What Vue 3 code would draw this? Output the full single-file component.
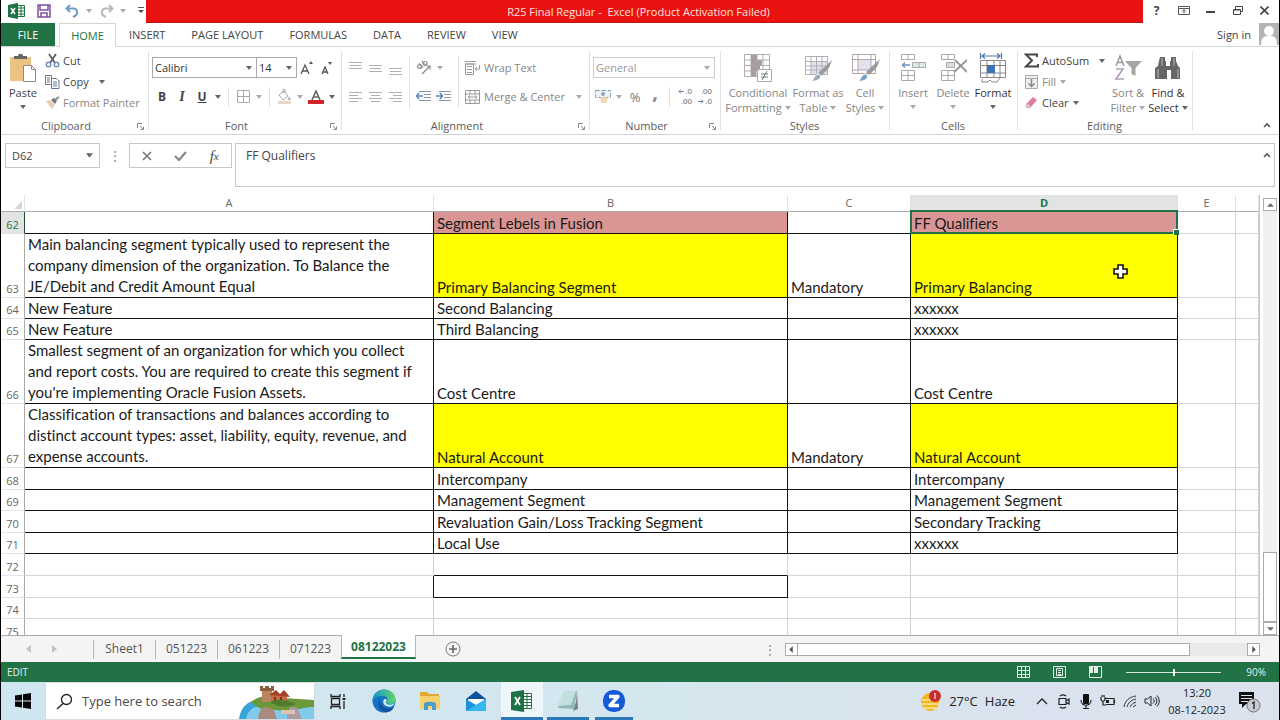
<script setup>
import { ref } from 'vue'

const menuTabs = ['INSERT', 'PAGE LAYOUT', 'FORMULAS', 'DATA', 'REVIEW', 'VIEW']
const columns = ['A', 'B', 'C', 'D', 'E', '']
const sheets = ['Sheet1', '051223', '061223', '071223']
const formula = ref('FF Qualifiers')
const cellName = ref('D62')
const query = ref('')
const zoom = ref(90)

const rows = [
  { n: 62, h: 22, box: true, a: '', b: 'Segment Lebels in Fusion', c: '', d: 'FF Qualifiers', fill: 'rose' },
  { n: 63, h: 64, box: true, a: 'Main balancing segment typically used to represent the\ncompany dimension of the organization. To Balance the\nJE/Debit and Credit Amount Equal', b: 'Primary Balancing Segment', c: 'Mandatory', d: 'Primary Balancing', fill: 'yellow' },
  { n: 64, h: 21, box: true, a: 'New Feature', b: 'Second Balancing', c: '', d: 'xxxxxx' },
  { n: 65, h: 21, box: true, a: 'New Feature', b: 'Third Balancing', c: '', d: 'xxxxxx' },
  { n: 66, h: 64, box: true, a: "Smallest segment of an organization for which you collect\nand report costs. You are required to create this segment if\nyou're implementing Oracle Fusion Assets.", b: 'Cost Centre', c: '', d: 'Cost Centre' },
  { n: 67, h: 64, box: true, a: 'Classification of transactions and balances according to\ndistinct account types: asset, liability, equity, revenue, and\nexpense accounts.', b: 'Natural Account', c: 'Mandatory', d: 'Natural Account', fill: 'yellow' },
  { n: 68, h: 22, box: true, a: '', b: 'Intercompany', c: '', d: 'Intercompany' },
  { n: 69, h: 21, box: true, a: '', b: 'Management Segment', c: '', d: 'Management Segment' },
  { n: 70, h: 22, box: true, a: '', b: 'Revaluation Gain/Loss Tracking Segment', c: '', d: 'Secondary Tracking' },
  { n: 71, h: 21, box: true, a: '', b: 'Local Use', c: '', d: 'xxxxxx' },
  { n: 72, h: 22 },
  { n: 73, h: 22 },
  { n: 74, h: 21 },
  { n: 75, h: 22 }
]

function cellClass(row, key) {
  return {
    boxed: row.box,
    [row.fill]: row.fill && (key === 'b' || key === 'd'),
    selected: row.n === 62 && key === 'd',
    'edge-bottom': (row.n === 72 || row.n === 73) && key === 'b',
    'edge-right': row.n === 73 && (key === 'a' || key === 'b')
  }
}
</script>

<template>
  <div class="window">
    <header class="titlebar">
      <div class="quick">
        <svg class="xl" width="18" height="16" viewBox="0 0 18 16"><path fill="#1e7145" d="M0 2l10-2v16L0 14z" /><path d="M10 2.500h6.500v11H10M10 5h6M10 8h6M10 11h6M13 3v10" fill="none" stroke="#1e7145" /><path d="M3 5l4 6M7 5l-4 6" stroke="#fff" stroke-width="1.500" /></svg>
        <button class="q20" aria-label="Save"><svg width="14" height="14" viewBox="0 0 14 14"><path d="M1 1h12v12H1z M3 1v5h8V1 M4 13V9h6v4" fill="#fff" stroke="#7d4fa0" stroke-width="1.500" /></svg></button>
        <button class="q26" aria-label="Undo"><svg width="15" height="14" viewBox="0 0 15 14"><path d="M5 1L1.500 4.500L5 8M2 4.500h7a4 4 0 0 1 1 7.500l-2 1" fill="none" stroke="#6f9cc8" stroke-width="2" /></svg></button>
        <svg class="caret light" width="6" height="4" viewBox="0 0 6 4"><path d="M0 0h6L3 4z" /></svg>
        <button class="q26" aria-label="Redo"><svg width="15" height="14" viewBox="0 0 15 14"><path d="M10 1l3.500 3.500L10 8M13 4.500H6A4 4 0 0 0 5 12l2 1" fill="none" stroke="#b9b9b9" stroke-width="2" /></svg></button>
        <svg class="caret light" width="6" height="4" viewBox="0 0 6 4"><path d="M0 0h6L3 4z" /></svg>
        <svg class="custom" width="6" height="7" viewBox="0 0 6 7"><path d="M0 0h6v1H0zM0 3h6L3 6z" fill="#555" /></svg>
      </div>
      <h1>R25 Final Regular - &nbsp;Excel (Product Activation Failed)</h1>
      <div class="winctl">
        <button aria-label="Help"><b>?</b></button>
        <button aria-label="Ribbon options"><svg width="12" height="9" viewBox="0 0 12 9"><path d="M.5.5h11v8H.5zM.5 2.500h11M6 7.500V4M4 5.500l2-2 2 2" fill="none" stroke="#555" /></svg></button>
        <button aria-label="Minimize"><svg width="9" height="9" viewBox="0 0 9 9"><path d="M0 6h9" stroke="#444" stroke-width="2" /></svg></button>
        <button aria-label="Restore"><svg width="10" height="9" viewBox="0 0 10 9"><path d="M.5 3.500h7v5h-7zM2.500 3V.5h7v5H8M1 4h6" fill="none" stroke="#444" /></svg></button>
        <button aria-label="Close"><svg width="9" height="9" viewBox="0 0 9 9"><path d="M.5.5l8 8M8.500.5l-8 8" stroke="#444" stroke-width="1.600" /></svg></button>
      </div>
    </header>

    <nav class="menu">
      <button class="file">FILE</button>
      <button class="home">HOME</button>
      <button v-for="t in menuTabs" :key="t" class="tab">{{ t }}</button>
      <a class="signin" href="#">Sign in</a>
      <svg class="avatar" width="20" height="22" viewBox="0 0 20 22"><path fill="#b4b4b4" d="M0 0h20v22H0z" /><circle cx="10" cy="8" r="5" fill="#fff" /><path d="M2 22c0-6 2-9 6-9h4c4 0 6 3 6 9z" fill="#fff" /></svg>
    </nav>

    <section class="ribbon">
      <div class="group g-clip">
        <div class="body">
          <button class="big paste">
            <svg width="30" height="30" viewBox="0 0 30 30"><path fill="#eac282" d="M2 4h21v24H2z" /><path d="M6 6V3h4c0-3 5-3 5 0h4v3z" fill="#666" /><path fill="#fff" stroke="#8a8a8a" d="M15.500 12.500h8l4 4v12h-12zM23.500 12.500v4h4" /></svg>
            <span>Paste</span><svg class="caret" width="6" height="4" viewBox="0 0 6 4"><path d="M0 0h6L3 4z" /></svg>
          </button>
          <div class="stack">
            <button><svg width="15" height="15" viewBox="0 0 15 15"><path d="M4 1l6 9M11 1L5 10" stroke="#5c5c5c" stroke-width="1.800" /><circle cx="3.500" cy="11.500" r="2.300" fill="none" stroke="#6d8fb5" stroke-width="1.400" /><circle cx="11.500" cy="11.500" r="2.300" fill="none" stroke="#6d8fb5" stroke-width="1.400" /></svg>Cut</button>
            <button><svg width="15" height="14" viewBox="0 0 15 14"><path d="M.5.5h6v9h-6zM2 3h3M2 5h3M2 7h3" fill="#fff" stroke="#777" /><path d="M6.500 3.500h5l2.500 2.500v7.500h-7.500zM8 7h4M8 9h4M8 11h4" fill="#fff" stroke="#62799a" /></svg>Copy<svg class="caret gap" width="6" height="4" viewBox="0 0 6 4"><path d="M0 0h6L3 4z" /></svg></button>
            <button class="off"><svg width="15" height="13" viewBox="0 0 15 13"><path d="M1 5l4-1 5 5-3 4z" fill="#eacdb0" /><path d="M6 4l3-2 3 3-2 3z" fill="#777" /><path d="M10 4l4-3" stroke="#888" stroke-width="2" /></svg>Format Painter</button>
          </div>
        </div>
        <footer><span>Clipboard</span><svg class="launch" width="7" height="7" viewBox="0 0 7 7"><path d="M.5 5V.5H5M3 3l3 3M6.500 3.500v3h-3" /></svg></footer>
      </div>

      <div class="group g-font">
        <div class="body rows">
          <div class="line">
            <label class="combo fname"><select aria-label="Font"><option>Calibri</option></select><svg class="caret" width="6" height="4" viewBox="0 0 6 4"><path d="M0 0h6L3 4z" /></svg></label>
            <label class="combo fsize"><select aria-label="Font size"><option>14</option></select><svg class="caret" width="6" height="4" viewBox="0 0 6 4"><path d="M0 0h6L3 4z" /></svg></label>
            <button class="i20 grow" aria-label="Increase font size"><svg width="14" height="14" viewBox="0 0 14 14"><path d="M1 13L5 4l4 9M2.500 10h5" fill="none" stroke="#555" stroke-width="1.300" /><path d="M9 3h4l-2-3z" fill="#557" /></svg></button>
            <button class="i20" aria-label="Decrease font size"><svg width="14" height="14" viewBox="0 0 14 14"><path d="M2 13l3-7 3 7M3 11h4" fill="none" stroke="#555" stroke-width="1.300" /><path d="M8 1h4l-2 3z" fill="#557" /></svg></button>
          </div>
          <div class="line">
            <button class="i20 fmt"><b>B</b></button><button class="i20 fmt it"><b>I</b></button><button class="i20 fmt un"><b>U</b></button>
            <button class="i12" aria-label="Underline options"><svg class="caret" width="6" height="4" viewBox="0 0 6 4"><path d="M0 0h6L3 4z" /></svg></button>
            <i class="sep"></i>
            <button class="i20" aria-label="Borders"><svg width="13" height="13" viewBox="0 0 13 13"><path d="M.5.5h12v12H.5zM6.500 0v13M0 6.500h13" fill="none" stroke="#aaa" /></svg></button>
            <button class="i12" aria-label="Border options"><svg class="caret light" width="6" height="4" viewBox="0 0 6 4"><path d="M0 0h6L3 4z" /></svg></button>
            <i class="sep"></i>
            <button class="i20" aria-label="Fill colour"><svg width="15" height="15" viewBox="0 0 15 15"><path d="M2 6l5-4 4 5-5 4zM6 4V0h2v4" fill="none" stroke="#aaa" /><path d="M12 7l2 4h-3z" fill="#aaa" /><path fill="#e8d6c6" d="M1 12h13v3H1z" /></svg></button>
            <button class="i12" aria-label="Fill options"><svg class="caret light" width="6" height="4" viewBox="0 0 6 4"><path d="M0 0h6L3 4z" /></svg></button>
            <button class="i20" aria-label="Font colour"><svg width="16" height="14" viewBox="0 0 16 14"><path d="M4 10l4-9 4 9M5.500 7h5" fill="none" stroke="#666" stroke-width="1.600" /><path fill="#d2232a" d="M0 10h16v4H0z" /></svg></button>
            <button class="i12" aria-label="Font colour options"><svg class="caret" width="6" height="4" viewBox="0 0 6 4"><path d="M0 0h6L3 4z" /></svg></button>
          </div>
        </div>
        <footer><span>Font</span><svg class="launch" width="7" height="7" viewBox="0 0 7 7"><path d="M.5 5V.5H5M3 3l3 3M6.500 3.500v3h-3" /></svg></footer>
      </div>

      <div class="group g-align">
        <div class="body">
          <div class="rows">
            <div class="line">
              <button class="i20" aria-label="Top align"><svg width="13" height="14" viewBox="0 0 13 14"><path d="M0 1.500h13M1 4.500h11M0 7.500h13" stroke="#b0b0b0" /></svg></button>
              <button class="i20" aria-label="Middle align"><svg width="13" height="14" viewBox="0 0 13 14"><path d="M0 4.500h13M1 7.500h11M0 10.500h13" stroke="#b0b0b0" /></svg></button>
              <button class="i20" aria-label="Bottom align"><svg width="13" height="14" viewBox="0 0 13 14"><path d="M0 7.500h13M1 10.500h11M0 13.500h13" stroke="#b0b0b0" /></svg></button>
            </div>
            <div class="line">
              <button class="i20" aria-label="Align left"><svg width="13" height="11" viewBox="0 0 13 11"><path d="M0 1.500h13M0 4.500h9M0 7.500h13M0 10.500h9" stroke="#b0b0b0" /></svg></button>
              <button class="i20" aria-label="Centre"><svg width="13" height="11" viewBox="0 0 13 11"><path d="M0 1.500h13M2 4.500h9M0 7.500h13M2 10.500h9" stroke="#b0b0b0" /></svg></button>
              <button class="i20" aria-label="Align right"><svg width="13" height="11" viewBox="0 0 13 11"><path d="M0 1.500h13M4 4.500h9M0 7.500h13M4 10.500h9" stroke="#b0b0b0" /></svg></button>
            </div>
          </div>
          <i class="sep tall"></i>
          <div class="rows col2">
            <div class="line">
              <button class="i20" aria-label="Orientation"><svg width="16" height="15" viewBox="0 0 16 15"><g fill="none" stroke="#888" stroke-width="1.200"><circle cx="3.500" cy="6.500" r="2" /><path d="M3 3.500l4 4M6 1l4 5" /><circle cx="9" cy="3.500" r="2" /><path d="M6 14l8-8M10.500 6H14v3.500" /></g></svg></button>
              <button class="i12" aria-label="Orientation options"><svg class="caret light" width="6" height="4" viewBox="0 0 6 4"><path d="M0 0h6L3 4z" /></svg></button>
            </div>
            <div class="line">
              <button class="i20" aria-label="Decrease indent"><svg width="16" height="11" viewBox="0 0 16 11"><path d="M3 .5h12M8 3.500h7M8 6.500h7M3 9.500h12" stroke="#8797a8" /><path d="M0 5h7M3 2L.500 5 3 8" fill="none" stroke="#5d86b4" stroke-width="1.500" /></svg></button>
              <button class="i20" aria-label="Increase indent"><svg width="16" height="11" viewBox="0 0 16 11"><path d="M3 .5h12M8 3.500h7M8 6.500h7M3 9.500h12" stroke="#8797a8" /><path d="M0 5h6M4 2l2.500 3L4 8" fill="none" stroke="#5d86b4" stroke-width="1.500" /></svg></button>
            </div>
          </div>
          <i class="sep tall"></i>
          <div class="rows">
            <div class="line"><button class="wide off"><svg width="15" height="14" viewBox="0 0 15 14"><path d="M0 .5h11M.5 3v10.500h8V3zM2 5.500h5M2 8.500h5M2 11.500h5M0 3h11M14.500 4v4H10M12 6l-2 2 2 2" fill="none" stroke="#999" /></svg>Wrap Text</button></div>
            <div class="line"><button class="wide off"><svg width="15" height="14" viewBox="0 0 15 14"><path d="M.5.5h14v13H.5zM0 4h15M0 10h15M5 0v4M10 0v4M5 10v4M10 10v4M3 7h9M5 5.500L3 7l2 1.500M10 5.500L12 7l-2 1.500" fill="none" stroke="#999" /></svg>Merge &amp; Center<svg class="caret light gap" width="6" height="4" viewBox="0 0 6 4"><path d="M0 0h6L3 4z" /></svg></button></div>
          </div>
        </div>
        <footer><span>Alignment</span><svg class="launch" width="7" height="7" viewBox="0 0 7 7"><path d="M.5 5V.5H5M3 3l3 3M6.500 3.500v3h-3" /></svg></footer>
      </div>

      <div class="group g-num">
        <div class="body rows">
          <div class="line"><label class="combo nfmt off"><select aria-label="Number format"><option>General</option></select><svg class="caret light" width="6" height="4" viewBox="0 0 6 4"><path d="M0 0h6L3 4z" /></svg></label></div>
          <div class="line">
            <button class="i20" aria-label="Accounting format"><svg width="16" height="15" viewBox="0 0 16 15"><path d="M.5 1.500h15v7H.5z" fill="#eef3f8" stroke="#829ab4" stroke-dasharray="4 2" /><circle cx="8" cy="5" r="2" fill="#8fa6bf" /><path d="M5 8h7v6H6z" fill="#efcf9d" opacity=".8" /></svg></button>
            <button class="i12" aria-label="Accounting options"><svg class="caret light" width="6" height="4" viewBox="0 0 6 4"><path d="M0 0h6L3 4z" /></svg></button>
            <button class="i20 sym">%</button><button class="i20 comma">,</button>
            <i class="sep"></i>
            <button class="i20 dec" aria-label="Increase decimal"><span><svg width="6" height="5" viewBox="0 0 6 5"><path d="M6 2.500H1M3 .5l-2 2 2 2" /></svg>.0</span><span>.00</span></button>
            <button class="i20 dec" aria-label="Decrease decimal"><span>.00</span><span><svg width="6" height="5" viewBox="0 0 6 5"><path d="M0 2.500h5M3 .5l2 2-2 2" /></svg>.0</span></button>
          </div>
        </div>
        <footer><span>Number</span><svg class="launch" width="7" height="7" viewBox="0 0 7 7"><path d="M.5 5V.5H5M3 3l3 3M6.500 3.500v3h-3" /></svg></footer>
      </div>

      <div class="group g-style">
        <div class="body">
          <button class="big off b66"><svg width="30" height="30" viewBox="0 0 30 30"><path d="M1.500 1.500h25v22h-25zM1 7h26M1 12.500h26M1 18h26M8 1v23M14 1v23M20 1v23" fill="none" stroke="#b5acb0" /><path fill="#a79da3" d="M8 2h6v5H8zM8 7h11v5H8zM8 12h9v6H8zM8 18h5v5H8z" /><path fill="#fff" stroke="#aaa" d="M14.500 16.500h14v12h-14z" /><path d="M18 21h7M18 24h7M24 18l-5 9" stroke="#777" /></svg><span>Conditional</span><span>Formatting<svg class="caret light" width="6" height="4" viewBox="0 0 6 4"><path d="M0 0h6L3 4z" /></svg></span></button>
          <button class="big off b54"><svg width="30" height="30" viewBox="0 0 30 30"><path fill="#dfe3ee" d="M8 9h16v12H8z" /><path d="M2.500 3.500h22v18h-22zM2 8.500h23M2 13h23M2 17h23M8 3v19M13.500 3v19M19 3v19" fill="none" stroke="#b0adb5" /><path d="M29 7L26 15 18 23l-3-3z" fill="#9a9a9a" /><path d="M8 28c3-1 3-7 8-7 4 3 0 8-8 7z" fill="#9eabb8" stroke="#fff" /></svg><span>Format as</span><span>Table<svg class="caret light" width="6" height="4" viewBox="0 0 6 4"><path d="M0 0h6L3 4z" /></svg></span></button>
          <button class="big off b40"><svg width="30" height="30" viewBox="0 0 30 30"><path fill="#dfe3ee" d="M8 7h13v10H8z" /><path d="M2.500 1.500h23v19h-23zM2 6.500h24M2 17h24M8 1v20M21 1v20" fill="none" stroke="#b5a5aa" /><path d="M30 6L27 14 19 22l-3-3z" fill="#999" /><path d="M8 28c3-1 3-7 8-7 4 3 0 8-8 7z" fill="#76a5bd" stroke="#fff" /></svg><span>Cell</span><span>Styles<svg class="caret light" width="6" height="4" viewBox="0 0 6 4"><path d="M0 0h6L3 4z" /></svg></span></button>
        </div>
        <footer class="plain"><span>Styles</span></footer>
      </div>

      <div class="group g-cells">
        <div class="body">
          <button class="big off b40"><svg width="28" height="30" viewBox="0 0 28 30"><path d="M2.500 1.500h13v5h-13zM9 1v6M2.500 17.500h13v10h-13zM9 17v11M2 22.500h14" fill="none" stroke="#aaa" /><path fill="#dcebe5" stroke="#aaa" d="M13.500 9.500h13v5h-13zM20 9v6" /><path d="M3 12h8M6 9.500L3.500 12 6 14.500" fill="none" stroke="#6d93bb" stroke-width="1.400" /></svg><span>Insert</span><svg class="caret light" width="6" height="4" viewBox="0 0 6 4"><path d="M0 0h6L3 4z" /></svg></button>
          <button class="big off b40"><svg width="28" height="30" viewBox="0 0 28 30"><path d="M2.500 1.500h13v5h-13zM9 1v6M2.500 17.500h13v10h-13zM9 17v11M2 22.500h14" fill="none" stroke="#aaa" /><path fill="#ddd" stroke="#aaa" d="M7.500 9.500h8v5h-8z" /><path d="M16 7l12 12M28 7L15 19" stroke="#9a938c" stroke-width="1.800" /></svg><span>Delete</span><svg class="caret light" width="6" height="4" viewBox="0 0 6 4"><path d="M0 0h6L3 4z" /></svg></button>
          <button class="big b40 dark"><svg width="28" height="30" viewBox="0 0 28 30"><path d="M1.500 0v6M22.500 0v6M3 3h18M6 .5L3 3l3 2.500M18 .5L21 3l-3 2.500" fill="none" stroke="#4e7aaa" stroke-width="1.200" /><path d="M1.500 7.500h25v17h-25zM1 12.500h26M1 20h26M8 7v18M15 7v18M21 7v18M3 26v3h6l2-2 2 2h5l3-4" fill="none" stroke="#888" /><path fill="#3f73ad" d="M8 12h8v8H8z" /></svg><span>Format</span><svg class="caret" width="6" height="4" viewBox="0 0 6 4"><path d="M0 0h6L3 4z" /></svg></button>
        </div>
        <footer class="plain"><span>Cells</span></footer>
      </div>

      <div class="group g-edit">
        <div class="body">
          <div class="stack">
            <button><svg width="15" height="15" viewBox="0 0 15 15"><path d="M13 4V1.500H2L8 7.500 2 13.500h12V11" fill="none" stroke="#444" stroke-width="2" /></svg>AutoSum<svg class="caret gap" width="6" height="4" viewBox="0 0 6 4"><path d="M0 0h6L3 4z" /></svg></button>
            <button class="off"><svg width="15" height="14" viewBox="0 0 15 14"><path d="M1.500.5h12v13h-12zM1 3.500h13" fill="#eee" stroke="#aaa" /><path d="M7.500 4v7M4.500 8.500l3 3 3-3" fill="none" stroke="#888" stroke-width="1.500" /></svg>Fill<svg class="caret light near" width="6" height="4" viewBox="0 0 6 4"><path d="M0 0h6L3 4z" /></svg></button>
            <button><svg width="15" height="13" viewBox="0 0 15 13"><path d="M3 7l6-6 4 3-6 7z" fill="#e07fa0" /><path d="M3 7l4 4-2 1-3-1z" fill="#f3c4d2" stroke="#caa" /></svg>Clear<svg class="caret near" width="6" height="4" viewBox="0 0 6 4"><path d="M0 0h6L3 4z" /></svg></button>
          </div>
          <button class="big off b40"><svg width="28" height="30" viewBox="0 0 28 30"><path d="M2 13L6 3l4 10M3.500 9.500h5" fill="none" stroke="#999" stroke-width="1.500" /><path d="M2 16h7L2 26h8" fill="none" stroke="#b39abd" stroke-width="1.600" /><path d="M11 8h17l-6.500 7v8l-4-2v-6z" fill="#a5a5a5" /></svg><span>Sort &amp;</span><span>Filter<svg class="caret light" width="6" height="4" viewBox="0 0 6 4"><path d="M0 0h6L3 4z" /></svg></span></button>
          <button class="big b40 dark"><svg width="28" height="30" viewBox="0 0 28 30"><path d="M6 4h5v4h1v5h4V8h1V4h5v4l2 5 2 2v11h-9v-9h-4v9H1V15l3-2 1-5z" fill="#666" /><path d="M4 16v9M24 16v9M8 5v8M20 5v8" stroke="#bbb" /></svg><span>Find &amp;</span><span>Select<svg class="caret" width="6" height="4" viewBox="0 0 6 4"><path d="M0 0h6L3 4z" /></svg></span></button>
        </div>
        <footer class="plain"><span>Editing</span></footer>
      </div>
      <button class="fold" aria-label="Collapse ribbon"><svg width="8" height="6" viewBox="0 0 8 6"><path d="M1 5l3-3 3 3" fill="none" stroke="#555" stroke-width="1.600" /></svg></button>
    </section>

    <section class="fbar">
      <div class="namebox"><input v-model="cellName" aria-label="Name box" /><svg class="caret" width="7" height="5" viewBox="0 0 6 4"><path d="M0 0h6L3 4z" /></svg></div>
      <span class="dots">⋮</span>
      <div class="fbuttons">
        <button aria-label="Cancel"><svg width="10" height="10" viewBox="0 0 10 10"><path d="M1 1l8 8M9 1L1 9" stroke="#777" stroke-width="1.600" /></svg></button>
        <button aria-label="Enter"><svg width="13" height="10" viewBox="0 0 13 10"><path d="M1 5l4 4 7-8" fill="none" stroke="#888" stroke-width="2.200" /></svg></button>
        <button class="fx" aria-label="Insert function"><i>f</i><sub>x</sub></button>
      </div>
      <div class="formula"><textarea v-model="formula" aria-label="Formula bar"></textarea><button aria-label="Collapse formula bar"><svg width="8" height="6" viewBox="0 0 8 6"><path d="M1 5l3-3 3 3" fill="none" stroke="#555" stroke-width="1.600" /></svg></button></div>
    </section>

    <main class="sheet">
      <div class="gridwrap">
        <table>
          <colgroup><col class="cn" /><col class="ca" /><col class="cb" /><col class="cc" /><col class="cd" /><col class="ce" /><col /></colgroup>
          <thead><tr><th class="corner"><svg width="8" height="8" viewBox="0 0 8 8"><path d="M8 0v8H0z" fill="#d5d5d5" /></svg></th><th v-for="(c, i) in columns" :key="i" :class="{ active: c === 'D' }">{{ c }}</th></tr></thead>
          <tbody>
            <tr v-for="row in rows" :key="row.n" :style="{ height: row.h + 'px' }">
              <th :class="{ active: row.n === 62 }">{{ row.n }}</th>
              <td v-for="k in ['a', 'b', 'c', 'd']" :key="k" :class="cellClass(row, k)">{{ row[k] }}<i v-if="row.n === 62 && k === 'd'" class="frame"></i><svg v-if="row.n === 63 && k === 'd'" class="pointer" width="15" height="15" viewBox="0 0 15 15"><path d="M5 1h5v4h4v5h-4v4H5v-4H1V5h4z" fill="#fff" stroke="#111" stroke-width="1.600" /></svg></td>
              <td></td><td></td>
            </tr>
          </tbody>
        </table>
      </div>
      <div class="vscroll">
        <button aria-label="Scroll up"><svg width="7" height="4" viewBox="0 0 8 4"><path d="M0 4h8L4 0z" fill="#666" /></svg></button>
        <div class="vtrack"><div class="vthumb"></div></div>
        <button aria-label="Scroll down"><svg width="7" height="4" viewBox="0 0 8 4"><path d="M0 0h8L4 4z" fill="#666" /></svg></button>
      </div>
    </main>

    <nav class="sheets">
      <div class="arrows"><svg width="5" height="8" viewBox="0 0 5 8"><path d="M5 0v8L0 4z" fill="#c4c4c4" /></svg><svg width="5" height="8" viewBox="0 0 5 8"><path d="M0 0v8l5-4z" fill="#c4c4c4" /></svg></div>
      <button v-for="s in sheets" :key="s" class="stab">{{ s }}</button>
      <button class="stab current">08122023</button>
      <button class="add" aria-label="New sheet"><svg width="16" height="16" viewBox="0 0 16 16"><circle cx="8" cy="8" r="7" fill="none" stroke="#777" /><path d="M8 4v8M4 8h8" stroke="#666" stroke-width="1.600" /></svg></button>
      <span class="dots">⋮</span>
      <div class="hscroll">
        <button aria-label="Scroll left"><svg width="4" height="7" viewBox="0 0 4 8"><path d="M4 0v8L0 4z" fill="#555" /></svg></button>
        <div class="htrack"><div class="hthumb"></div></div>
        <button aria-label="Scroll right"><svg width="4" height="7" viewBox="0 0 4 8"><path d="M0 0v8l4-4z" fill="#555" /></svg></button>
      </div>
    </nav>

    <footer class="status">
      <span class="mode">EDIT</span>
      <button aria-label="Normal view"><svg width="13" height="12" viewBox="0 0 13 12"><path d="M.5.5h12v11H.5zM4.500 0v12M8.500 0v12M0 4.500h13M0 8.500h13" fill="none" stroke="#e3f1e8" /></svg></button>
      <button aria-label="Page layout view"><svg width="13" height="12" viewBox="0 0 13 12"><path d="M.5.5h12v11H.5zM3.500 2.500h6v7h-6zM5 4.500h3M5 6.500h3M5 8.500h3" fill="none" stroke="#e3f1e8" /></svg></button>
      <button aria-label="Page break view"><svg width="13" height="12" viewBox="0 0 13 12"><path d="M.5.5h12v11H.5z" fill="none" stroke="#e3f1e8" /><path d="M1 1h3v6H1zM5 1h4v6H5z" fill="#e3f1e8" /></svg></button>
      <input v-model="zoom" class="range" type="range" min="10" max="170" aria-label="Zoom" />
      <span class="pct">90%</span>
    </footer>

    <footer class="taskbar">
      <button class="start" aria-label="Start"><svg width="16" height="16" viewBox="0 0 16 16"><path d="M0 2.500l7-1v6H0zM8 1.300L16 0v7.500H8zM0 8.500h7v6l-7-1zM8 8.500h8V16l-8-1.300z" fill="#050505" /></svg></button>
      <label class="search">
        <svg width="17" height="17" viewBox="0 0 17 17"><circle cx="10.500" cy="6.500" r="5" fill="none" stroke="#222" stroke-width="1.300" /><path d="M7 10.500L1 16" stroke="#222" stroke-width="1.400" /></svg>
        <input v-model="query" placeholder="Type here to search" aria-label="Search" />
        <svg class="art" width="76" height="34" viewBox="0 0 76 34"><path d="M1 34C3 20 12 15 22 15L76 17V34z" fill="#38a3d8" /><path d="M8 34c2-9 8-13 15-13l24 5 29-5v13z" fill="#80cbe9" /><path d="M13 17c10-8 22-7 32-4l31 2v7c-12-1-22 6-32 4-12-3-20 2-31-9z" fill="#6b983b" /><path d="M20 34c1-9 5-14 12-11 5 0 5 7 7 11z" fill="#a88b7c" /><path d="M49 34c0-10 3-14 10-11l5 11z" fill="#ae9aa3" /><path d="M24 3h10v14H24z" fill="#b98660" /><path d="M22 1h3v2h2V1h4v2h2V1h3v5H22z" fill="#8f5c3e" /><path d="M33 9h16v9H33z" fill="#c86d42" /><path d="M31 10l7-5 4 4 4-4 6 7z" fill="#a54128" /><path d="M36 12h2v4h-2zM42 12h2v4h-2z" fill="#693421" /><path d="M32 17c8-4 18-2 26 2-9 4-19 3-26-2z" fill="#4f7c2c" /><path d="M43 25h14v4H43z" fill="#dac5b3" /></svg>
      </label>
      <button class="app" aria-label="Task view"><svg width="16" height="15" viewBox="0 0 16 15"><path d="M1 0v2.500h9V0M1 15v-2.500h9V15M1.500 4.500h8v6h-8zM14 0v3M14 7v8" fill="none" stroke="#222" stroke-width="1.300" /><path d="M12.500 4h3v2h-3z" fill="#222" /></svg></button>
      <button class="app" aria-label="Edge"><svg width="24" height="24" viewBox="0 0 24 24"><defs><linearGradient id="eg" x1="0" x2="1"><stop stop-color="#1692d0" /><stop offset="1" stop-color="#62d66b" /></linearGradient></defs><circle cx="12" cy="12" r="11.500" fill="#1674c4" /><path d="M.5 12C1 5 6 .5 12 .5S24 5 23.500 11c-.5 4-6 5-9 3 3-5-1-8-6-7C5 7 2 9 .500 12z" fill="url(#eg)" /><path d="M14 13.500c1 3 6 3 9 0-1 3-4 5-7 4-4-1-6-4-4-7 1-1 3 0 3 1-1 1-1 1-1 2z" fill="#cfeaf2" /><path d="M8 10c-4 5-1 12 5 13 4 1 8-2 9-5-4 3-14 2-14-8z" fill="#1553a0" /></svg></button>
      <button class="app" aria-label="File Explorer"><svg width="22" height="20" viewBox="0 0 22 20"><path d="M1 1h7l2 2h10v5H1z" fill="#e0a732" /><path d="M1 5h20v13H1z" fill="#f7d16c" /><path d="M5 19v-6c0-3 12-3 12 0v6h-4v-4H9v4z" fill="#4c9bce" /></svg></button>
      <button class="app" aria-label="Mail"><svg width="22" height="20" viewBox="0 0 22 20"><path d="M1 8L11 0l10 8v12H1z" fill="#0d539d" /><path d="M3 8h16v7H3z" fill="#fff" /><path d="M1 8l10 6 10-6v12H1z" fill="#1d91db" /><path d="M1 20L21 8v12z" fill="#35b8ef" /></svg></button>
      <button class="app open front" aria-label="Excel"><svg width="22" height="22" viewBox="0 0 22 22"><path fill="#fff" stroke="#1e7145" d="M11 3.500h9.500v15H11M11 6.500h9M11 9.500h9M11 12.500h9M11 15.500h9M16 4v14" /><path fill="#1e7145" d="M0 2l13-2v22L0 20z" /><path d="M4 7l5 8M9 7l-5 8" stroke="#fff" stroke-width="1.800" /></svg></button>
      <button class="app open" aria-label="Notepad"><svg width="24" height="22" viewBox="0 0 24 22"><path d="M8 2l13-1-3 18-16-1z" fill="#8fb9bc" /><path d="M8 2l12-1-5 14-14 1z" fill="#c3e0df" /><path d="M21 1l1 18-5 2 3-9z" fill="#7d8080" /></svg></button>
      <button class="app open zoomapp" aria-label="Zoom"><svg width="24" height="24" viewBox="0 0 24 24"><rect x="1" y="1" width="22" height="22" rx="10" fill="#155bd7" /><path d="M7 7.500h9L8 16.500h9" fill="none" stroke="#fff" stroke-width="3.400" stroke-linejoin="round" /></svg></button>

      <div class="tray">
        <button class="weather"><svg width="22" height="22" viewBox="0 0 22 22"><circle cx="10" cy="12" r="9" fill="#f6b51e" /><path d="M2 10h16M1 14h18M4 18h12" stroke="#f9dd84" stroke-width="2" /><circle cx="15" cy="6" r="6" fill="#c9302a" /><path d="M14 4l1-1v6" fill="none" stroke="#fff" /></svg><span>27°C</span><span>Haze</span></button>
        <button class="t22" aria-label="Show hidden icons"><svg width="12" height="8" viewBox="0 0 12 8"><path d="M1 7l5-5 5 5" fill="none" stroke="#222" stroke-width="1.300" /></svg></button>
        <button class="t22" aria-label="Meet now"><svg width="12" height="15" viewBox="0 0 12 15"><path d="M1 4.500h7v6H1zM8 7l3-2v5L8 8.500M2 2c2-1.500 4-1.500 6 0M2 13c2 1.500 4 1.500 6 0" fill="none" stroke="#222" stroke-width="1.200" /></svg></button>
        <button class="t22" aria-label="Microphone"><svg width="12" height="15" viewBox="0 0 12 15"><rect x="3" y="0" width="6" height="10" rx="1" fill="#111" /><path d="M1 6c0 7 10 7 10 0M6 11v3M3 14.500h6" fill="none" stroke="#222" stroke-width="1.200" /></svg></button>
        <button class="t22" aria-label="Battery"><svg width="16" height="12" viewBox="0 0 16 12"><path d="M5 3.500h9v6H6M14.500 5v3M1 2v2c0 3 4 3 4 0V2M2 0v2M4 0v2M3 6v4h3" fill="none" stroke="#222" stroke-width="1.200" /><path d="M6 5h3v3H6z" fill="#222" /></svg></button>
        <button class="t22" aria-label="Wi-Fi"><svg width="14" height="13" viewBox="0 0 14 13"><path d="M1 12C2 6 6 2 13 1M4 12c1-4 4-7 9-8M7 12c1-2 3-4 6-5M10 12l3-2" fill="none" stroke="#333" /></svg></button>
        <button class="t22" aria-label="Volume"><svg width="16" height="14" viewBox="0 0 16 14"><path d="M1 5h2.500L7 2v10L3.500 9H1zM9 4.500c1.500 1.500 1.500 3.500 0 5M11 3c2.500 2.500 2.500 5.500 0 8M13 1.500c3 3.500 3 7.500 0 11" fill="none" stroke="#222" /></svg></button>
        <time class="clock"><span>13:20</span><span>08-12-2023</span></time>
        <button class="notes" aria-label="Notifications"><svg width="24" height="24" viewBox="0 0 24 24"><path d="M2 3h15v12H9l-4 4v-4H2z" fill="#111" /><path d="M4 6.500h11M4 9.500h11M4 12.500h7" stroke="#dbe6ee" /><circle cx="16.500" cy="16.500" r="6.500" fill="#c5cbd0" stroke="#777" /><path d="M15 14.500l2-1.500v7" fill="none" stroke="#222" stroke-width="1.300" /></svg></button>
      </div>
    </footer>
  </div>
</template>

<style>
body { margin: 0; background: #fff; }
</style>

<style scoped>
* { box-sizing: border-box; }
.window { display: flex; flex-direction: column; height: 100vh; min-width: 1200px; overflow: hidden; border-left: 1px solid #000; border-right: 1px solid #000; background: #fff; font: 11px/14px "Open Sans", "Noto Sans", sans-serif; color: #444; }
button { display: inline-flex; align-items: center; justify-content: center; padding: 0; border: 0; background: none; font: inherit; color: inherit; white-space: nowrap; }
svg { display: block; flex: none; }
input, select, textarea { font: inherit; color: inherit; border: 0; margin: 0; background: transparent; outline: 0; }
.caret { fill: #666; }
.light { fill: #aaa; }
.off { color: #868686; }
.dark { color: #333; }

.titlebar { display: flex; flex: none; height: 23px; }
.quick { display: flex; align-items: center; width: 145px; padding: 0 2px 2px 7px; }
.q20 { width: 36px; }
.q26 { width: 20px; }
.quick .caret { margin: 0 4px; }
.custom { margin-left: auto; }
.titlebar h1 { flex: 1; margin: 0; padding-right: 12px; background: #ea1111; border-bottom: 1px solid #b91515; color: #ffe4df; font-size: 11px; font-weight: 400; line-height: 24px; text-align: center; }
.winctl { display: flex; width: 136px; padding-bottom: 2px; }
.winctl button { width: 27px; }
.winctl b { font-size: 12px; }

.menu { display: flex; flex: none; height: 24px; border-bottom: 1px solid #d4d4d4; color: #444; }
.file { width: 54px; background: #217346; color: #fff; }
.home { width: 57px; margin: 0 13px -1px 4px; height: 24px; border: 1px solid #d4d4d4; border-bottom: 0; background: #fff; color: #217346; }
.tab { margin-right: 26px; }
.signin { margin-left: auto; margin-right: 8px; color: #444; text-decoration: none; line-height: 23px; }

.ribbon { display: flex; flex: none; height: 88px; border-bottom: 1px solid #d4d4d4; }
.group { display: flex; flex-direction: column; justify-content: space-between; flex: none; padding: 2px 0 1px; position: relative; }
.group::after { content: ""; position: absolute; right: 0; top: 4px; bottom: 4px; width: 1px; background: #e1e1e1; }
.g-clip { width: 148px; }
.g-font { width: 193px; }
.g-align { width: 248px; }
.g-num { width: 131px; }
.g-style { width: 169px; }
.g-cells { width: 128px; }
.g-edit { width: 175px; }
.body { display: flex; height: 68px; padding-left: 3px; }
.rows { display: flex; flex-direction: column; gap: 8px; padding-top: 8px; }
.line { display: flex; align-items: center; height: 21px; }
.group footer { display: flex; align-items: center; justify-content: center; height: 15px; color: #5c5c5c; padding-right: 18px; position: relative; }
.group .plain { padding-right: 2px; }
.launch { position: absolute; right: 5px; top: 5px; fill: none; stroke: #888; }
.big { flex-direction: column; justify-content: flex-start; padding-top: 4px; }
.big > svg:first-child { margin-bottom: 2px; }
.big span { display: flex; align-items: center; gap: 3px; line-height: 15px; }
.big > .caret { margin-top: 5px; }
.b66 { width: 66px; }
.b54 { width: 54px; }
.b40 { width: 40px; }
.paste { width: 34px; margin: 0 5px 0 2px; }
.stack { display: flex; flex-direction: column; padding-top: 1px; }
.stack button { justify-content: flex-start; height: 21px; gap: 3px; }
.gap { margin-left: 7px; }
.near { margin-left: 1px; }
.i20 { width: 20px; height: 20px; }
.i12 { width: 12px; height: 20px; }
.sep { width: 9px; height: 20px; background: linear-gradient(#e1e1e1, #e1e1e1) center / 1px 100% no-repeat; }
.tall { height: 52px; margin-top: 7px; }
.col2 { width: 40px; }
.combo { display: flex; position: relative; height: 21px; border: 1px solid #ababab; color: #333; }
.combo select { appearance: none; width: 100%; padding: 0 2px; }
.combo .caret { position: absolute; right: 4px; top: 8px; pointer-events: none; }
.combo.off { color: #999; border-color: #ccc; }
.fname { width: 105px; }
.fsize { width: 40px; border-left: 0; }
.nfmt { width: 122px; }
.fmt { font-size: 12px; }
.it { font-family: "Liberation Serif", serif; font-style: italic; font-size: 14px; }
.un { text-decoration: underline; }
.wide { gap: 4px; margin-left: 2px; }
.sym { font-size: 13px; color: #777; }
.comma { font-size: 20px; font-weight: 700; color: #888; padding-bottom: 10px; }
.dec { flex-direction: column; font: 8px/10px "Liberation Sans", sans-serif; color: #666; align-items: flex-end; padding-right: 2px; }
.dec span { display: flex; align-items: center; gap: 1px; }
.dec svg { fill: none; stroke: #6d86a5; }
.g-style .body { padding-left: 4px; }
.g-edit .stack { width: 87px; padding-left: 3px; }
.fold { margin-left: auto; width: 24px; align-self: flex-end; height: 18px; }

.fbar { display: flex; align-items: flex-start; flex: none; height: 60px; padding: 8px 4px 0 4px; font-size: 12px; }
.namebox { display: flex; align-items: center; width: 95px; height: 25px; border: 1px solid #c8c8c8; padding: 0 6px; }
.namebox input { flex: 1; min-width: 0; padding: 0; font-size: 11px; }
.dots { width: 29px; text-align: center; line-height: 25px; color: #999; font-size: 14px; }
.fbuttons { display: flex; width: 103px; height: 25px; border: 1px solid #c8c8c8; margin-right: 3px; }
.fbuttons button { flex: 1; }
.fx { font-family: "Liberation Serif", serif; font-size: 15px; }
.fx sub { font-size: 11px; font-style: italic; }
.formula { display: flex; flex: 1; height: 44px; border: 1px solid #c8c8c8; }
.formula textarea { flex: 1; resize: none; padding: 5px 10px; overflow: hidden; }
.formula button { width: 15px; height: 22px; }

.sheet { display: flex; flex: 1; min-height: 0; border-bottom: 1px solid #ababab; }
.gridwrap { flex: 1; overflow: hidden; border-right: 1px solid #c8c8c8; }
table { width: 100%; table-layout: fixed; border-collapse: separate; border-spacing: 0; }
.cn { width: 24px; }
.ca { width: 409px; }
.cb { width: 354px; }
.cc { width: 123px; }
.cd { width: 267px; }
.ce { width: 58px; }
th { padding: 0; font-weight: 400; font-size: 11px; line-height: 14px; color: #666; }
thead th { height: 17px; border-bottom: 1px solid #ababab; border-right: 1px solid #e1e1e1; }
thead .active { background: #e1e4e2; color: #217346; font-weight: 700; border-bottom-color: #217346; }
.corner svg { margin: 3px 2px 0 auto; }
tbody th { vertical-align: bottom; padding-bottom: 1px; border-right: 1px solid #ababab; border-bottom: 1px solid #e4e4e4; }
tbody th.active { background: #e1e4e2; color: #217346; border-right-color: #1d4a30; }
td { position: relative; padding: 0 3px; vertical-align: bottom; border-right: 1px solid #d4d4d4; border-bottom: 1px solid #d4d4d4; font: 15px/20px Lato, sans-serif; font-variant-ligatures: none; color: #1a1a1a; white-space: pre; }
tr:nth-child(2) td:nth-child(2), tr:nth-child(5) td:nth-child(2), tr:nth-child(6) td:nth-child(2) { line-height: 21px; }
.boxed { border-color: #111; }
.rose { background: #da9694; }
.yellow { background: #ff0; }
.edge-bottom { border-bottom-color: #111; }
.edge-right { border-right-color: #111; }
.frame { position: absolute; inset: -2px -1px -1px -1px; border: 2px solid #217346; pointer-events: none; }
.frame::after { content: ""; position: absolute; right: -3px; bottom: -3px; width: 5px; height: 5px; background: #217346; border: 1px solid #fff; border-right: 0; border-bottom: 0; }
.selected { z-index: 1; }
.pointer { position: absolute; right: 49px; top: 30px; }

.vscroll { display: flex; flex-direction: column; width: 19px; padding: 3px 2px 0 3px; background: #fff; }
.vscroll button { flex: none; height: 13px; border: 1px solid #ababab; background: #fff; }
.vtrack { flex: 1; display: flex; flex-direction: column; justify-content: flex-end; background: #f0f0f0; }
.vthumb { height: 17%; border: 1px solid #ababab; background: #fff; }

.sheets { display: flex; flex: none; height: 26px; background: #f4f4f4; align-items: center; font-size: 12px; }
.arrows { display: flex; gap: 21px; width: 92px; padding-left: 25px; }
.stab { width: 62px; height: 19px; border-left: 1px solid #b5b5b5; color: #555; }
.current { width: 75px; height: 24px; align-self: flex-start; margin-top: -1px; border: 1px solid #b5b5b5; border-top: 0; border-bottom: 2px solid #217346; background: #fff; color: #217346; font-weight: 700; padding-top: 2px; }
.add { margin-left: 29px; }
.sheets .dots { margin-left: auto; width: 30px; }
.hscroll { display: flex; width: 37.2%; height: 13px; margin-right: 19px; }
.hscroll button { width: 13px; border: 1px solid #ababab; background: #fff; }
.htrack { flex: 1; background: #eaeaea; }
.hthumb { width: 87.3%; height: 13px; border: 1px solid #ababab; border-left: 0; background: #fff; }

.status { display: flex; flex: none; align-items: center; height: 20px; background: #217346; color: #e3f1e8; font-size: 10px; }
.mode { margin-left: 6px; margin-right: auto; }
.status button { width: 36px; }
.range { appearance: none; width: 95px; height: 12px; margin: 0 25px 0 13px; background: linear-gradient(#d6e8dd, #d6e8dd) center / 100% 1px no-repeat; }
.range::-webkit-slider-thumb { appearance: none; width: 2px; height: 7px; background: #fff; }
.pct { margin-right: 13px; }

.taskbar { display: flex; flex: none; align-items: stretch; height: 38px; background: linear-gradient(90deg, #cfe5ef, #d4e7ef 50%, #d9e3ee 75%, #dbe2ee); color: #222; }
.start { width: 44px; }
.search { display: flex; align-items: center; width: 270px; background: #fff; border: 1px solid #d4dde2; padding-left: 10px; }
.search input { flex: 1; min-width: 0; padding: 0 0 0 9px; font-size: 13px; line-height: 20px; }
.search input::placeholder { color: #4a4a4a; opacity: 1; }
.art { align-self: flex-end; margin-left: -50px; }
.app { width: 46px; }
.open { border-bottom: 3px solid #2a78b8; padding-top: 3px; margin: 0 2px; width: 42px; }
.front { background: #eef6fa; }
.zoomapp { margin-left: 4px; width: 38px; }
.tray { display: flex; align-items: center; margin-left: auto; }
.weather { gap: 7px; margin-right: 16px; font-size: 13px; }
.t22 { width: 22px; height: 38px; }
.clock { display: flex; flex-direction: column; align-items: center; gap: 3px; width: 68px; font-size: 11px; line-height: 14px; }
.notes { width: 48px; justify-content: flex-start; padding-left: 6px; }
</style>
